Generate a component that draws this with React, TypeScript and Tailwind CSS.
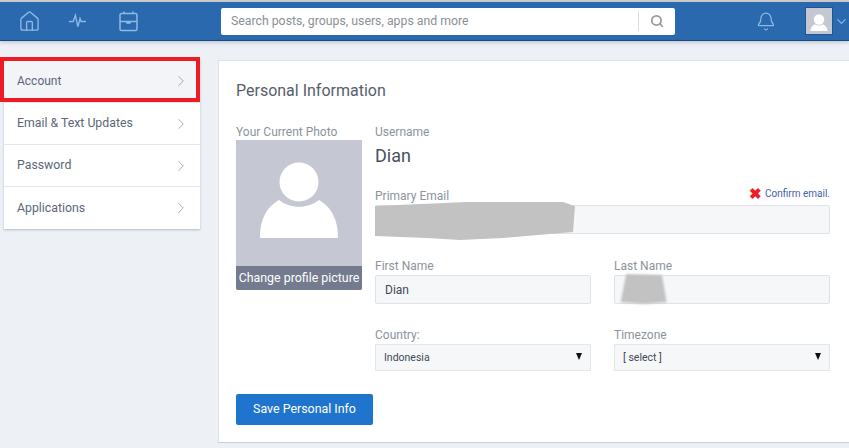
import React from "react";
import { ChevronRight, ChevronDown, Search, Bell, Home } from "lucide-react";

const MENU = ["Email & Text Updates", "Password", "Applications"];

function Field({ label, value, smudge }: { label: string; value?: string; smudge?: React.ReactNode }) {
  return (
    <div className="relative w-[217px]">
      <div className="text-[12px] leading-[16px] text-[#8b939c] mb-[1px]">{label}</div>
      <div className="h-[29px] bg-[#f6f7f9] border border-[#dfe3e8] rounded-[2px] pl-[9px] text-[12px] leading-[28px] text-[#3f4a56]">
        {value}
      </div>
      {smudge}
    </div>
  );
}

function SelectField({ label, value }: { label: string; value: string }) {
  return (
    <div className="w-[217px]">
      <div className="text-[12px] leading-[16px] text-[#8b939c] mb-[1px]">{label}</div>
      <div className="h-[27px] bg-[#f6f7f9] border border-[#e3e6ea] flex items-center justify-between pl-[8px] pr-[8px] text-[10.5px] text-[#3f4a56]">
        <span>{value}</span>
        <span className="w-0 h-0 border-l-[3.5px] border-r-[3.5px] border-t-[7px] border-l-transparent border-r-transparent border-t-[#111] mb-[2px]" />
      </div>
    </div>
  );
}

export default function App() {
  return (
    <div className="w-[849px] h-[448px] overflow-hidden bg-[#edf0f5] flex flex-col font-['Roboto',sans-serif]">
      <header className="h-[41px] shrink-0 bg-[#2a69ae] border-t-[2px] border-t-[#c9c9c9] border-b border-b-[#1b4a7e] flex items-center shadow-[0_2px_3px_rgba(120,140,170,0.35)]">
        <Home className="ml-[18px] w-[23px] h-[23px] text-[#8fb9e6]" strokeWidth={1.4} />
        <svg className="ml-[28px] w-[17px] h-[18px] text-[#8fb9e6]" viewBox="0 0 18 18" fill="none" stroke="currentColor" strokeWidth="1.5">
          <path d="M0 9.5h4.5l2.3-6.5 2.6 12 2.3-8.5 1.1 3H18" />
        </svg>
        <svg className="ml-[33px] w-[19px] h-[21px] text-[#8fb9e6]" viewBox="0 0 19 21" fill="none" stroke="currentColor" strokeWidth="1.5">
          <rect x="1" y="2.5" width="17" height="17" rx="1.5" />
          <path d="M1 10.5h17M5 0.5v2M14 0.5v2M8 10.5v1.5h3v-1.5" />
        </svg>
        <div className="ml-[83px] w-[455px] h-[27px] bg-white rounded-[2px] flex items-center">
          <span className="flex-1 pl-[10px] text-[12.3px] text-[#8a8f96]">Search posts, groups, users, apps and more</span>
          <span className="w-px h-[20px] bg-[#dcdcdc]" />
          <Search className="mx-[11px] w-[14px] h-[14px] text-[#9a9a9a]" strokeWidth={3} />
        </div>
        <Bell className="ml-[81px] w-[20px] h-[21px] text-[#8fb9e6]" strokeWidth={1.5} />
        <div className="ml-[29px] w-[28px] h-[28px] bg-[#c5c8d2] border border-[#1f5596] flex items-end justify-center overflow-hidden">
          <svg className="w-[20px] h-[22px] text-white" viewBox="0 0 20 22" fill="currentColor">
            <circle cx="10" cy="7.5" r="5.2" />
            <path d="M1.5 19c0-4 2.5-5.8 4.5-6.8 2.4 1.6 5.6 1.6 8 0 2 1 4.5 2.8 4.5 6.8z" />
          </svg>
        </div>
        <ChevronDown className="ml-[1px] w-[15px] h-[15px] text-[#8fb9e6]" strokeWidth={1.8} />
      </header>

      <main className="flex-1 flex items-start pl-[4px] pt-[19px]">
        <nav className="relative w-[196px] shrink-0 bg-white shadow-[0_1px_2px_rgba(120,130,150,0.5)]">
          <div className="relative h-[43px] bg-[#f3f4f8] border-b border-[#e3e5ea] flex items-center justify-between pl-[13px] pr-[10px] text-[12px] text-[#5b6678]">
            <span>Account</span>
            <ChevronRight className="w-[18px] h-[18px] text-[#a5a9b0]" strokeWidth={1.3} />
            <div className="absolute left-[-4px] right-0 top-[-3px] bottom-0 border-[4px] border-[#ed1c24]" />
          </div>
          {MENU.map((item) => (
            <div key={item} className="h-[42px] border-b border-[#e3e5ea] last:border-b-0 flex items-center justify-between pl-[13px] pr-[10px] text-[12.3px] text-[#5b6678]">
              <span>{item}</span>
              <ChevronRight className="w-[18px] h-[18px] text-[#a5a9b0]" strokeWidth={1.3} />
            </div>
          ))}
        </nav>

        <section className="ml-[18px] w-[640px] h-[383px] shrink-0 bg-white border border-[#dde1e8] border-b-[#c3cede] pl-[17px] pt-[20px]">
          <h2 className="text-[16px] leading-[19px] text-[#56606b]">Personal Information</h2>
          <div className="flex mt-[25px]">
            <div className="w-[126px] shrink-0">
              <div className="text-[12px] leading-[14px] text-[#8b939c] mb-[1px] whitespace-nowrap">Your Current Photo</div>
              <div className="h-[150px] bg-[#c5c8d2] rounded-b-[2px] flex flex-col overflow-hidden">
                <div className="flex-1 flex items-center justify-center">
                  <svg className="w-[80px] h-[76px] text-white mt-[-7px]" viewBox="0 0 80 76" fill="currentColor">
                    <circle cx="40" cy="20" r="19.5" />
                    <path d="M1 75c0-21 10-32 19-37 11 9 29 9 40 0 9 5 19 16 19 37 0 .6-.4 1-1 1H2c-.6 0-1-.4-1-1z" />
                  </svg>
                </div>
                <div className="h-[24px] bg-[#747b8f] text-white text-[12.4px] leading-[24px] text-center whitespace-nowrap">
                  Change profile picture
                </div>
              </div>
            </div>

            <div className="ml-[13px] w-[455px]">
              <div className="text-[12px] leading-[14px] text-[#8b939c]">Username</div>
              <div className="text-[18px] leading-[21px] text-[#47525e] mt-[6px]">Dian</div>

              <div className="relative mt-[21px]">
                <div className="flex items-end justify-between">
                  <span className="text-[12px] leading-[16px] text-[#8b939c]">Primary Email</span>
                  <span className="flex items-center text-[10px] leading-[14px] text-[#3f5fa8] mb-[3px]">
                    <span className="text-[15px] leading-[14px] font-bold text-[#ee1c25] mr-[3px]">✖</span>
                    Confirm email.
                  </span>
                </div>
                {/* input sits under the scribble that hides the address */}
                <div className="h-[29px] mt-[1px] bg-[#f6f7f9] border border-[#dfe3e8] rounded-[2px]" />
                <svg className="absolute left-0 top-[15px] w-[202px] h-[38px] text-[#c2c2c2] blur-[0.6px]" viewBox="0 0 202 38" fill="currentColor">
                  <path d="M0 4 92 0h96l12 4-2 26-70 6-43 2-33-2-52-2z" />
                </svg>
              </div>

              <div className="flex gap-[23px] mt-[24px]">
                <Field label="First Name" value="Dian" />
                <Field
                  label="Last Name"
                  smudge={
                    <svg className="absolute left-[5px] top-[15px] w-[52px] h-[32px] text-[#c2c2c2] blur-[1px]" viewBox="0 0 52 34" fill="currentColor">
                      <path d="M6 1 44 2l5 29-24 2-25-2z" />
                    </svg>
                  }
                />
              </div>

              <div className="flex gap-[23px] mt-[23px]">
                <SelectField label="Country:" value="Indonesia" />
                <SelectField label="Timezone" value="[ select ]" />
              </div>
            </div>
          </div>
          <button className="mt-[23px] w-[137px] h-[31px] bg-[#1f75cd] rounded-[2px] text-white text-[12.4px]">
            Save Personal Info
          </button>
        </section>
      </main>
    </div>
  );
}
